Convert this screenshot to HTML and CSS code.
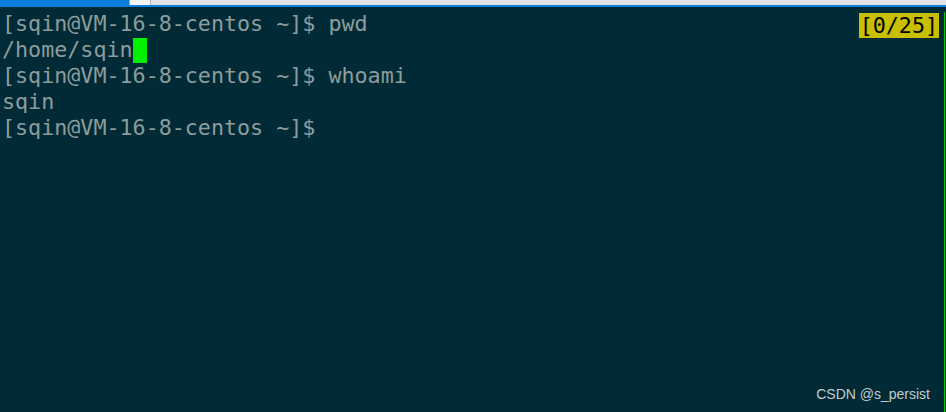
FILE: index.html
```html
<!DOCTYPE html>
<html>
<head>
<meta charset="utf-8">
<link rel="stylesheet" href="styles.css">
</head>
<body>
<div class="tabbar">
  <div class="tab-active"></div>
  <div class="tab-sep"></div>
  <div class="tab-light"></div>
  <div class="tab-sep2"></div>
  <div class="tab-rest"></div>
</div>
<div class="accent"></div>
<div class="term">
  <div class="lines">
    <div class="line">[sqin@VM-16-8-centos ~]$ pwd</div>
    <div class="line">/home/sqin<span class="cursor"></span></div>
    <div class="line">[sqin@VM-16-8-centos ~]$ whoami</div>
    <div class="line">sqin</div>
    <div class="line">[sqin@VM-16-8-centos ~]$</div>
  </div>
  <div class="counter">[0/25]</div>
  <div class="edge"></div>
  <div class="watermark">CSDN @s_persist</div>
</div>
</body>
</html>
```
FILE: styles.css
```css
html, body {
  margin: 0;
  padding: 0;
  width: 946px;
  height: 412px;
  overflow: hidden;
  background: #002b36;
}
.tabbar {
  display: flex;
  height: 5px;
}
.tab-active { width: 129px; background: #0a7fdc; }
.tab-sep { width: 1px; background: #9aa4ad; }
.tab-light { width: 20px; background: #f7f7f7; }
.tab-sep2 { width: 1px; background: #b5b5b5; }
.tab-rest { flex: 1; background: #e3e3e3; }
.accent {
  height: 2px;
  background: #0a7fdc;
}
.term {
  position: relative;
  height: 405px;
  padding: 4px 0 0 2px;
  box-sizing: border-box;
}
.lines {
  font-family: "DejaVu Sans Mono", monospace;
  font-size: 21.7px;
  line-height: 26px;
  color: #8d9c9c;
}
.line {
  white-space: pre;
  height: 26px;
}
.cursor {
  display: inline-block;
  width: 14px;
  height: 25px;
  vertical-align: top;
  margin-top: 1px;
  background: #00f000;
}
.counter {
  position: absolute;
  top: 6px;
  right: 7px;
  background: #c8bf00;
  color: #000;
  font-family: "DejaVu Sans Mono", monospace;
  font-size: 21.7px;
  line-height: 25px;
  padding: 0 1px;
}
.edge {
  position: absolute;
  top: 5px;
  bottom: 0;
  right: 1px;
  width: 1px;
  background: #00c800;
}
.watermark {
  position: absolute;
  right: 16px;
  bottom: 10px;
  font-family: "Liberation Sans", Arial, sans-serif;
  font-size: 14px;
  color: #c2ccd0;
}
```
